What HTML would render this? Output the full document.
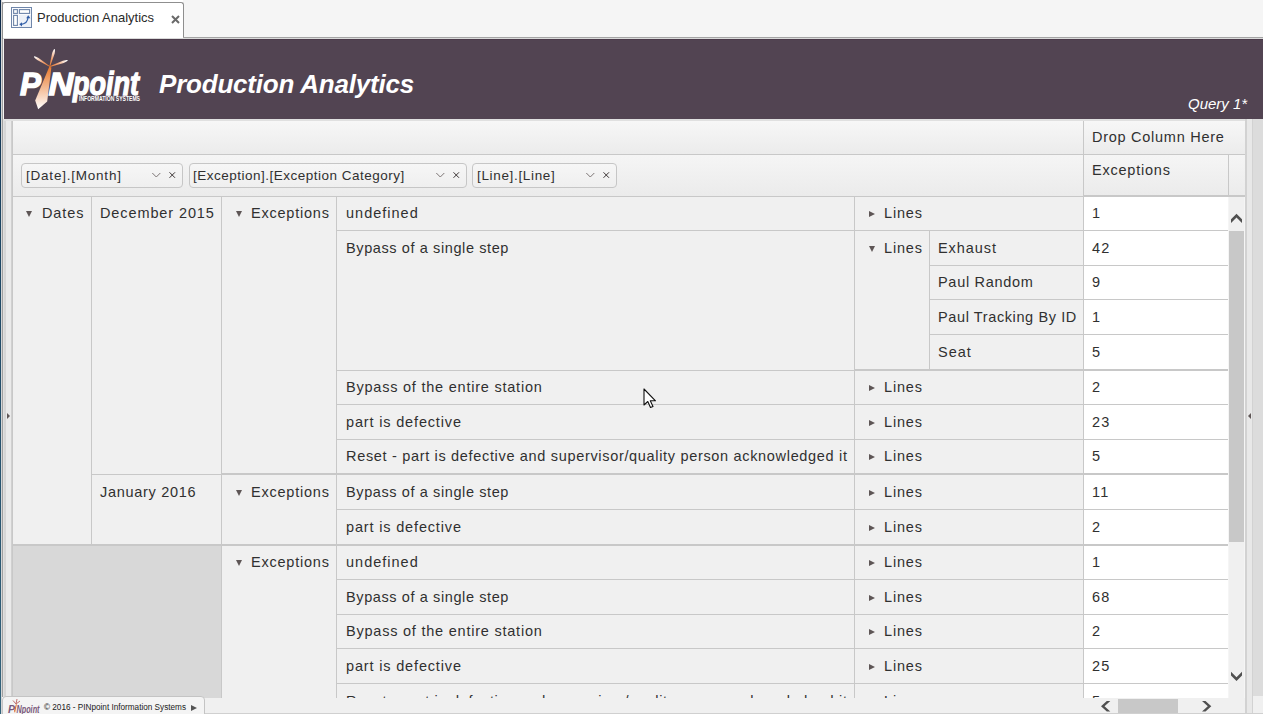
<!DOCTYPE html><html><head><meta charset="utf-8"><style>
*{margin:0;padding:0;box-sizing:border-box}
html,body{width:1263px;height:714px;overflow:hidden;background:#f5f5f5;position:relative;font-family:"Liberation Sans",sans-serif}
.a{position:absolute}
.t{position:absolute;font-size:14.5px;line-height:16px;letter-spacing:0.7px;color:#303030;white-space:nowrap}
.td{position:absolute;width:0;height:0;border-left:3.5px solid transparent;border-right:3.5px solid transparent;border-top:6px solid #5e5656}
.tr{position:absolute;width:0;height:0;border-top:3.5px solid transparent;border-bottom:3.5px solid transparent;border-left:6px solid #5e5656}
.chip{position:absolute;top:163px;height:25px;border:1px solid #c6c6c6;border-radius:4px;background:linear-gradient(#f6f6f6,#efefef)}
</style></head><body>
<div class="a" style="left:0;top:0;width:1px;height:714px;background:linear-gradient(#0c2746,#1c4563 30%,#33637c)"></div>
<div class="a" style="left:1px;top:0px;width:1px;height:714px;background:#d6d6d6"></div>
<div class="a" style="left:2px;top:2px;width:1px;height:695px;background:#a0a0a0"></div>
<div class="a" style="left:3px;top:0px;width:180px;height:2px;background:#ffffff"></div>
<div class="a" style="left:2px;top:2px;width:182px;height:37px;background:#fff;border:1px solid #8f8f8f;border-bottom:none;border-radius:3px 3px 0 0"></div>
<div class="a" style="left:183px;top:37px;width:1080px;height:1px;background:#a4a4a4"></div>
<div class="a" style="left:3px;top:38px;width:1260px;height:1px;background:#d9d9d9"></div>
<svg class="a" style="left:11px;top:7px" width="22" height="22" viewBox="0 0 22 22">
<rect x="0.5" y="0.5" width="20" height="20" fill="#fbfcfe" stroke="#6f86aa"/>
<rect x="8" y="8" width="12" height="12" fill="#edf1f8"/>
<rect x="2.6" y="2.6" width="3.8" height="3.8" fill="#fff" stroke="#6f86aa" stroke-width="1.1"/>
<rect x="8.4" y="2.6" width="10.2" height="3.8" fill="#fff" stroke="#6f86aa" stroke-width="1.1"/>
<rect x="2.6" y="8.4" width="3.8" height="10" fill="#fff" stroke="#6f86aa" stroke-width="1.1"/>
<path d="M17 10.5 Q16.5 16.5 10.5 17.3" fill="none" stroke="#3a66ad" stroke-width="1.3"/>
<path d="M15.2 11.2 L17.2 8.2 L19.4 11.2 Z" fill="#2f5ba5"/>
<path d="M11 15.2 L8.3 17.3 L11 19.6 Z" fill="#2f5ba5"/>
</svg>
<div class="a" style="left:37px;top:10px;font-size:13px;line-height:16px;color:#2a2a2a;white-space:nowrap">Production Analytics</div>
<svg class="a" style="left:171px;top:15px" width="9" height="9" viewBox="0 0 9 9"><path d="M1 1L8 8M8 1L1 8" stroke="#6a6a6a" stroke-width="2"/></svg>
<div class="a" style="left:4px;top:39px;width:1259px;height:80px;background:#524452"></div>
<div class="a" style="left:4px;top:39px;width:1259px;height:1px;background:#4b3b4a"></div>
<div class="a" style="left:159px;top:69px;font-size:26px;line-height:30px;font-weight:bold;font-style:italic;color:#fff;white-space:nowrap;letter-spacing:-0.2px">Production Analytics</div>
<div class="a" style="left:1188px;top:96px;font-size:15px;line-height:16px;font-style:italic;color:#fff;white-space:nowrap">Query 1*</div>
<svg class="a" style="left:15px;top:45px" width="130" height="68" viewBox="0 0 130 68">
<defs>
<linearGradient id="tg" x1="0" y1="0" x2="0" y2="1"><stop offset="0" stop-color="#e8772a"/><stop offset="1" stop-color="#ffffff"/></linearGradient>
<radialGradient id="rg" cx="34.7" cy="21.6" r="18" gradientUnits="userSpaceOnUse"><stop offset="0" stop-color="#e8772a"/><stop offset="0.45" stop-color="#f0a070"/><stop offset="1" stop-color="#fff"/></radialGradient>
</defs>
<g font-family="Liberation Sans" font-weight="bold" font-style="italic" fill="#fff" stroke="#fff" stroke-width="1.3">
<text x="5" y="49.5" font-size="31" textLength="21" lengthAdjust="spacingAndGlyphs">P</text>
<text x="33.5" y="49.5" font-size="31" textLength="25" lengthAdjust="spacingAndGlyphs">N</text>
<text x="58" y="49.5" font-size="33" textLength="66" lengthAdjust="spacingAndGlyphs">point</text>
</g>
<text x="64" y="55.7" font-family="Liberation Sans" font-weight="bold" font-size="6.4" fill="#fff" textLength="61" lengthAdjust="spacingAndGlyphs">INFORMATION SYSTEMS</text>
<path d="M34.3 21.8 L36.4 22.6 L32.2 56.5 L23.2 64.3 L20.2 55.5 Z" fill="url(#tg)"/>
<path d="M34.99 21.68 L39.58 8.74 Q40.44 4.23 39.60 4.00 Q38.76 3.77 37.17 8.06 L34.41 21.52 Z" fill="url(#rg)"/>
<path d="M34.86 21.35 L23.60 12.97 Q19.47 10.76 19.00 11.50 Q18.53 12.24 22.25 15.08 L34.54 21.85 Z" fill="url(#rg)"/>
<path d="M34.80 21.88 L48.69 18.06 Q53.09 16.13 52.80 15.30 Q52.51 14.47 47.86 15.69 L34.60 21.32 Z" fill="url(#rg)"/>
</svg>
<div class="a" style="left:3px;top:119px;width:1260px;height:2px;background:#e0e0e0"></div>
<div class="a" style="left:3px;top:121px;width:1px;height:576px;background:#e0e0e0"></div>
<div class="a" style="left:4px;top:121px;width:2px;height:576px;background:#d6d6d6"></div>
<div class="a" style="left:6px;top:121px;width:5px;height:576px;background:#eaeaea"></div>
<div class="a" style="left:11px;top:121px;width:1px;height:576px;background:#d0d0d0"></div>
<div class="a" style="left:7px;top:413px;width:0;height:0;border-top:3px solid transparent;border-bottom:3px solid transparent;border-left:3px solid #5e5656"></div>
<div class="a" style="left:1245px;top:119px;width:2px;height:595px;background:#d2d2d2"></div>
<div class="a" style="left:1247px;top:119px;width:5px;height:595px;background:#e8e8e8"></div>
<div class="a" style="left:1252px;top:119px;width:1px;height:595px;background:#d2d2d2"></div>
<div class="a" style="left:1253px;top:119px;width:10px;height:577px;background:#dcdcdc"></div>
<div class="a" style="left:1253px;top:696px;width:10px;height:18px;background:#f0f0f0"></div>
<div class="a" style="left:1248px;top:413px;width:0;height:0;border-top:3px solid transparent;border-bottom:3px solid transparent;border-right:3px solid #5e5656"></div>
<div class="a" style="left:12px;top:121px;width:1233px;height:34px;background:linear-gradient(#f7f7f7,#ebebeb)"></div>
<div class="a" style="left:12px;top:154px;width:1233px;height:1px;background:#c8c8c8"></div>
<div class="a" style="left:12px;top:155px;width:1233px;height:41px;background:linear-gradient(#f5f5f5,#ebebeb)"></div>
<div class="a" style="left:12px;top:121px;width:1px;height:577px;background:#c8c8c8"></div>
<div class="a" style="left:1083px;top:121px;width:1px;height:76px;background:#c8c8c8"></div>
<div class="a" style="left:1228px;top:155px;width:1px;height:41px;background:#c8c8c8"></div>
<div class="a" style="left:12px;top:196px;width:1071px;height:1px;background:#c8c8c8"></div>
<div class="a" style="left:1083px;top:195px;width:162px;height:2px;background:#c8c8c8"></div>
<div class="t" style="left:1092px;top:129px;letter-spacing:0.730px">Drop Column Here</div>
<div class="t" style="left:1092px;top:162px;letter-spacing:0.780px">Exceptions</div>
<div class="chip" style="left:21px;width:162px"></div>
<div class="t" style="left:26px;top:168px;font-size:13.5px;letter-spacing:0.78px">[Date].[Month]</div>
<svg class="a" style="left:152px;top:172px" width="9" height="6" viewBox="0 0 9 6"><path d="M0.3 1L4.3 5L8.3 1" fill="none" stroke="#7c7676" stroke-width="1"/></svg>
<svg class="a" style="left:169px;top:172px" width="7" height="7" viewBox="0 0 7 7"><path d="M0.5 0.3L6 5.8M6 0.3L0.5 5.8" stroke="#3a3434" stroke-width="1"/></svg>
<div class="chip" style="left:189px;width:278px"></div>
<div class="t" style="left:193px;top:168px;font-size:13.5px;letter-spacing:0.5px">[Exception].[Exception Category]</div>
<svg class="a" style="left:436px;top:172px" width="9" height="6" viewBox="0 0 9 6"><path d="M0.3 1L4.3 5L8.3 1" fill="none" stroke="#7c7676" stroke-width="1"/></svg>
<svg class="a" style="left:453px;top:172px" width="7" height="7" viewBox="0 0 7 7"><path d="M0.5 0.3L6 5.8M6 0.3L0.5 5.8" stroke="#3a3434" stroke-width="1"/></svg>
<div class="chip" style="left:472px;width:145px"></div>
<div class="t" style="left:477px;top:168px;font-size:13.5px;letter-spacing:0.66px">[Line].[Line]</div>
<svg class="a" style="left:586px;top:172px" width="9" height="6" viewBox="0 0 9 6"><path d="M0.3 1L4.3 5L8.3 1" fill="none" stroke="#7c7676" stroke-width="1"/></svg>
<svg class="a" style="left:603px;top:172px" width="7" height="7" viewBox="0 0 7 7"><path d="M0.5 0.3L6 5.8M6 0.3L0.5 5.8" stroke="#3a3434" stroke-width="1"/></svg>
<div class="a" style="left:13px;top:197px;width:1215px;height:501px;background:#f0f0f0"></div>
<div class="a" style="left:1084px;top:197px;width:144px;height:501px;background:#ffffff"></div>
<div class="a" style="left:13px;top:546px;width:208px;height:152px;background:#d8d8d8"></div>
<div class="a" style="left:1229px;top:197px;width:15px;height:501px;background:#f0f0f0"></div>
<div class="a" style="left:1229px;top:231px;width:15px;height:311px;background:#c8c8c8"></div>
<svg class="a" style="left:1230px;top:213px" width="13" height="11" viewBox="0 0 13 11"><path d="M1 6.3L6.5 0.8L12 6.3L12 10L6.5 4.5L1 10Z" fill="#505050"/></svg>
<svg class="a" style="left:1230px;top:671px" width="13" height="11" viewBox="0 0 13 11"><path d="M1 0.7L6.5 6.2L12 0.7L12 4.4L6.5 9.9L1 4.4Z" fill="#505050"/></svg>
<div class="a" style="left:91px;top:197px;width:1px;height:348px;background:#c8c8c8"></div>
<div class="a" style="left:221px;top:197px;width:1px;height:501px;background:#c8c8c8"></div>
<div class="a" style="left:336px;top:197px;width:1px;height:501px;background:#c8c8c8"></div>
<div class="a" style="left:854px;top:197px;width:1px;height:501px;background:#c8c8c8"></div>
<div class="a" style="left:929px;top:231px;width:1px;height:138px;background:#c8c8c8"></div>
<div class="a" style="left:1083px;top:197px;width:1px;height:501px;background:#c8c8c8"></div>
<div class="a" style="left:13px;top:544px;width:1215px;height:2px;background:#c8c8c8"></div>
<div class="a" style="left:92px;top:474px;width:129px;height:1px;background:#c8c8c8"></div>
<div class="a" style="left:222px;top:473px;width:1006px;height:2px;background:#c8c8c8"></div>
<div class="a" style="left:337px;top:230px;width:891px;height:1px;background:#c8c8c8"></div>
<div class="a" style="left:337px;top:404px;width:891px;height:1px;background:#c8c8c8"></div>
<div class="a" style="left:337px;top:439px;width:891px;height:1px;background:#c8c8c8"></div>
<div class="a" style="left:337px;top:509px;width:891px;height:1px;background:#c8c8c8"></div>
<div class="a" style="left:337px;top:579px;width:891px;height:1px;background:#c8c8c8"></div>
<div class="a" style="left:337px;top:614px;width:891px;height:1px;background:#c8c8c8"></div>
<div class="a" style="left:337px;top:648px;width:891px;height:1px;background:#c8c8c8"></div>
<div class="a" style="left:337px;top:683px;width:891px;height:1px;background:#c8c8c8"></div>
<div class="a" style="left:337px;top:370px;width:517px;height:1px;background:#c8c8c8"></div>
<div class="a" style="left:855px;top:369px;width:373px;height:2px;background:#c8c8c8"></div>
<div class="a" style="left:930px;top:265px;width:298px;height:1px;background:#c8c8c8"></div>
<div class="a" style="left:930px;top:299px;width:298px;height:1px;background:#c8c8c8"></div>
<div class="a" style="left:930px;top:334px;width:298px;height:1px;background:#c8c8c8"></div>
<div class="td" style="left:26px;top:211px"></div>
<div class="t" style="left:42px;top:205px;letter-spacing:0.900px">Dates</div>
<div class="t" style="left:100px;top:205px;letter-spacing:0.890px">December 2015</div>
<div class="td" style="left:236px;top:211px"></div>
<div class="t" style="left:251px;top:205px;letter-spacing:0.780px">Exceptions</div>
<div class="t" style="left:100px;top:484px;letter-spacing:0.700px">January 2016</div>
<div class="td" style="left:236px;top:490px"></div>
<div class="t" style="left:251px;top:484px;letter-spacing:0.780px">Exceptions</div>
<div class="td" style="left:236px;top:560px"></div>
<div class="t" style="left:251px;top:554px;letter-spacing:0.780px">Exceptions</div>
<div class="t" style="left:346px;top:205px;letter-spacing:1.000px">undefined</div>
<div class="tr" style="left:869px;top:211px"></div>
<div class="t" style="left:884px;top:205px;letter-spacing:0.820px">Lines</div>
<div class="t" style="left:1092px;top:205px;letter-spacing:1.200px">1</div>
<div class="t" style="left:346px;top:240px;letter-spacing:0.605px">Bypass of a single step</div>
<div class="td" style="left:869px;top:246px"></div>
<div class="t" style="left:884px;top:240px;letter-spacing:0.820px">Lines</div>
<div class="t" style="left:938px;top:240px;letter-spacing:0.920px">Exhaust</div>
<div class="t" style="left:1092px;top:240px;letter-spacing:1.200px">42</div>
<div class="t" style="left:938px;top:274px;letter-spacing:0.700px">Paul Random</div>
<div class="t" style="left:1092px;top:274px;letter-spacing:1.200px">9</div>
<div class="t" style="left:938px;top:309px;letter-spacing:0.610px">Paul Tracking By ID</div>
<div class="t" style="left:1092px;top:309px;letter-spacing:1.200px">1</div>
<div class="t" style="left:938px;top:344px;letter-spacing:1.000px">Seat</div>
<div class="t" style="left:1092px;top:344px;letter-spacing:1.200px">5</div>
<div class="t" style="left:346px;top:379px;letter-spacing:0.774px">Bypass of the entire station</div>
<div class="tr" style="left:869px;top:385px"></div>
<div class="t" style="left:884px;top:379px;letter-spacing:0.820px">Lines</div>
<div class="t" style="left:1092px;top:379px;letter-spacing:1.200px">2</div>
<div class="t" style="left:346px;top:414px;letter-spacing:0.837px">part is defective</div>
<div class="tr" style="left:869px;top:420px"></div>
<div class="t" style="left:884px;top:414px;letter-spacing:0.820px">Lines</div>
<div class="t" style="left:1092px;top:414px;letter-spacing:1.200px">23</div>
<div class="t" style="left:346px;top:448px;letter-spacing:0.674px">Reset - part is defective and supervisor/quality person acknowledged it</div>
<div class="tr" style="left:869px;top:454px"></div>
<div class="t" style="left:884px;top:448px;letter-spacing:0.820px">Lines</div>
<div class="t" style="left:1092px;top:448px;letter-spacing:1.200px">5</div>
<div class="t" style="left:346px;top:484px;letter-spacing:0.605px">Bypass of a single step</div>
<div class="tr" style="left:869px;top:490px"></div>
<div class="t" style="left:884px;top:484px;letter-spacing:0.820px">Lines</div>
<div class="t" style="left:1092px;top:484px;letter-spacing:1.200px">11</div>
<div class="t" style="left:346px;top:519px;letter-spacing:0.837px">part is defective</div>
<div class="tr" style="left:869px;top:525px"></div>
<div class="t" style="left:884px;top:519px;letter-spacing:0.820px">Lines</div>
<div class="t" style="left:1092px;top:519px;letter-spacing:1.200px">2</div>
<div class="t" style="left:346px;top:554px;letter-spacing:1.000px">undefined</div>
<div class="tr" style="left:869px;top:560px"></div>
<div class="t" style="left:884px;top:554px;letter-spacing:0.820px">Lines</div>
<div class="t" style="left:1092px;top:554px;letter-spacing:1.200px">1</div>
<div class="t" style="left:346px;top:589px;letter-spacing:0.605px">Bypass of a single step</div>
<div class="tr" style="left:869px;top:595px"></div>
<div class="t" style="left:884px;top:589px;letter-spacing:0.820px">Lines</div>
<div class="t" style="left:1092px;top:589px;letter-spacing:1.200px">68</div>
<div class="t" style="left:346px;top:623px;letter-spacing:0.774px">Bypass of the entire station</div>
<div class="tr" style="left:869px;top:629px"></div>
<div class="t" style="left:884px;top:623px;letter-spacing:0.820px">Lines</div>
<div class="t" style="left:1092px;top:623px;letter-spacing:1.200px">2</div>
<div class="t" style="left:346px;top:658px;letter-spacing:0.837px">part is defective</div>
<div class="tr" style="left:869px;top:664px"></div>
<div class="t" style="left:884px;top:658px;letter-spacing:0.820px">Lines</div>
<div class="t" style="left:1092px;top:658px;letter-spacing:1.200px">25</div>
<div class="t" style="left:346px;top:693px;letter-spacing:0.674px">Reset - part is defective and supervisor/quality person acknowledged it</div>
<div class="tr" style="left:869px;top:699px"></div>
<div class="t" style="left:884px;top:693px;letter-spacing:0.820px">Lines</div>
<div class="t" style="left:1092px;top:693px;letter-spacing:1.200px">5</div>
<div class="a" style="left:13px;top:698px;width:1215px;height:15px;background:#f0f0f0"></div>
<div class="a" style="left:1228px;top:698px;width:17px;height:15px;background:#f0f0f0"></div>
<div class="a" style="left:3px;top:713px;width:1260px;height:1px;background:#d0d0d0"></div>
<div class="a" style="left:1118px;top:699px;width:60px;height:14px;background:#c8c8c8"></div>
<svg class="a" style="left:1100px;top:700px" width="12" height="13" viewBox="0 0 12 13"><path d="M6.8 1L1 6.3L6.8 11.6L10.3 11.6L4.5 6.3L10.3 1Z" fill="#505050"/></svg>
<svg class="a" style="left:1201px;top:700px" width="12" height="13" viewBox="0 0 12 13"><path d="M1 1L6.8 6.3L1 11.6L4.5 11.6L10.3 6.3L4.5 1Z" fill="#505050"/></svg>
<div class="a" style="left:2px;top:696px;width:203px;height:20px;background:#f4f4f4;border:1px solid #c4c4c4;border-radius:4px 4px 0 0"></div>
<svg class="a" style="left:7px;top:698px" width="36" height="16" viewBox="0 0 36 16">
<g font-family="Liberation Sans" font-weight="bold" font-style="italic" fill="#7a587a"><text x="1" y="14.5" font-size="10" textLength="7" lengthAdjust="spacingAndGlyphs">P</text><text x="9.5" y="14.5" font-size="10" textLength="23" lengthAdjust="spacingAndGlyphs">Npoint</text></g>
<path d="M9 6 L9.8 6.5 L8 15 L7 13 Z" fill="#e07030"/>
<path d="M9 6 L6 2.5 M9 6 L10 1 M9 6 L13 3" stroke="#c07070" stroke-width="1"/>
</svg>
<svg class="a" style="left:43px;top:699px" width="148" height="14" viewBox="0 0 148 14"><text x="1" y="10.8" font-family="Liberation Sans" font-size="9.6" fill="#222" textLength="142" lengthAdjust="spacingAndGlyphs">© 2016 - PINpoint Information Systems</text></svg>
<div class="a" style="left:191px;top:705px;width:0;height:0;border-top:3px solid transparent;border-bottom:3px solid transparent;border-left:6px solid #555"></div>
<svg class="a" style="left:643px;top:388px" width="14" height="22" viewBox="0 0 14 22">
<path d="M1 1 L1 17 L4.8 13.5 L7.5 19.5 L10 18.5 L7.3 12.8 L12.5 12.8 Z" fill="#fff" stroke="#111" stroke-width="1.1" stroke-linejoin="round"/>
</svg>
</body></html>
